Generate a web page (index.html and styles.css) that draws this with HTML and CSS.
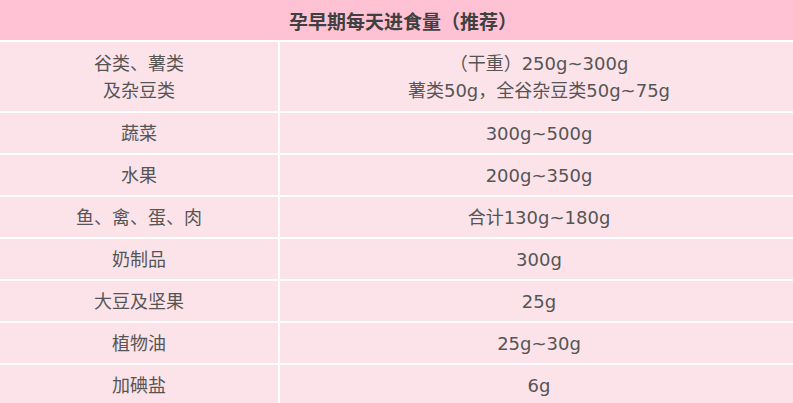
FILE: index.html
```html
<!DOCTYPE html>
<html lang="zh">
<head>
<meta charset="utf-8">
<title>孕早期每天进食量（推荐）</title>
<link rel="stylesheet" href="styles.css">
</head>
<body>
<div class="table">
  <div class="head">孕早期每天进食量（推荐）</div>
  <div class="cell">谷类、薯类<br>及杂豆类</div>
  <div class="cell">（干重）250g~300g<br>薯类50g，全谷杂豆类50g~75g</div>
  <div class="cell">蔬菜</div>
  <div class="cell">300g~500g</div>
  <div class="cell">水果</div>
  <div class="cell">200g~350g</div>
  <div class="cell">鱼、禽、蛋、肉</div>
  <div class="cell">合计130g~180g</div>
  <div class="cell">奶制品</div>
  <div class="cell">300g</div>
  <div class="cell">大豆及坚果</div>
  <div class="cell">25g</div>
  <div class="cell">植物油</div>
  <div class="cell">25g~30g</div>
  <div class="cell">加碘盐</div>
  <div class="cell">6g</div>
</div>
</body>
</html>
```
FILE: styles.css
```css
html, body {
  margin: 0;
  padding: 0;
  background: #ffffff;
  overflow: hidden;
}
.table {
  width: 798px;
  display: grid;
  grid-template-columns: 278px 1fr;
  grid-template-rows: 40px 69px repeat(7, 40px);
  gap: 2px;
  background: #ffffff;
  font-family: "DejaVu Sans", "Noto Sans CJK SC", sans-serif;
  font-size: 18px;
  color: #555555;
}
.head {
  grid-column: 1 / 3;
  background: #ffc2d4;
  display: flex;
  align-items: center;
  justify-content: center;
  padding-left: 8px;
  font-family: "Noto Sans CJK SC", sans-serif;
  font-weight: bold;
  font-size: 19px;
  color: #404040;
}
.cell {
  background: #fce3ea;
  display: flex;
  align-items: center;
  justify-content: center;
  text-align: center;
  line-height: 27px;
}
```
